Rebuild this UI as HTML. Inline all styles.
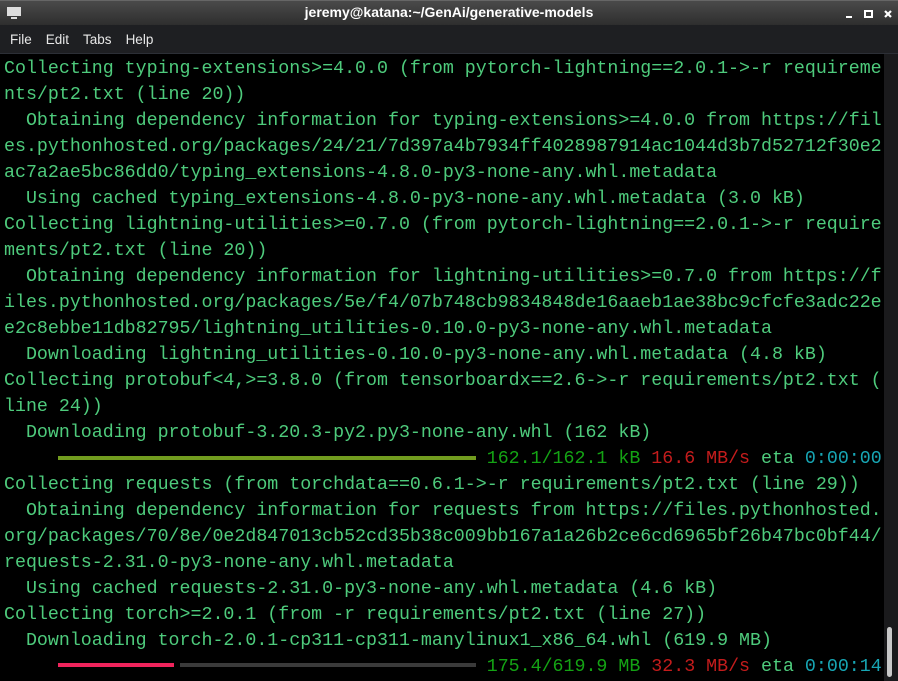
<!DOCTYPE html>
<html><head><meta charset="utf-8"><style>
body{margin:0;width:898px;height:681px;background:#000;overflow:hidden;font-family:"Liberation Sans",sans-serif;position:relative}
#title{position:absolute;left:0;top:0;width:898px;height:25px;background:linear-gradient(#4a4a4a,#2e2e2e);border-top:1px solid #666;box-sizing:border-box;color:#fff;font-weight:bold;font-size:14px;text-align:center;line-height:23px}
#menu{position:absolute;left:0;top:25px;width:898px;height:28px;background:#1e1f22;border-bottom:1px solid #2c2f36;color:#e8e8e8;font-size:13.5px;line-height:29px}
#menu span{margin-left:10px;margin-right:4px}
#term{position:absolute;left:4px;top:56px;font-family:"Liberation Mono",monospace;font-size:18.3px;line-height:26px;color:#4ecb7c;white-space:pre}
#sb{position:absolute;left:884px;top:54px;width:14px;height:627px;background:#1a1a1c}
#thumb{position:absolute;left:887px;top:627px;width:5px;height:50px;background:#c8c8c8;border-radius:3px}
.g{color:#14a314}.r{color:#c41c1c}.c{color:#17a6b4}
.bar{position:absolute;height:4px}
</style></head><body>
<div id="title"><svg style="position:absolute;left:6px;top:5px" width="16" height="14"><rect x="1" y="1" width="14" height="9" fill="#ddd"/><rect x="5" y="11" width="6" height="2" fill="#ddd"/></svg>jeremy@katana:~/GenAi/generative-models
<svg style="position:absolute;left:843px;top:8px" width="50" height="10"><rect x="3" y="7" width="6" height="2" fill="#fff"/><rect x="22" y="2" width="7" height="6" fill="none" stroke="#fff" stroke-width="2"/><path d="M42 2l6 6M48 2l-6 6" stroke="#fff" stroke-width="2.2"/></svg></div>
<div id="menu"><span>File</span><span>Edit</span><span>Tabs</span><span>Help</span></div>
<div id="term">Collecting typing-extensions&gt;=4.0.0 (from pytorch-lightning==2.0.1-&gt;-r requireme
nts/pt2.txt (line 20))
  Obtaining dependency information for typing-extensions&gt;=4.0.0 from https://fil
es.pythonhosted.org/packages/24/21/7d397a4b7934ff4028987914ac1044d3b7d52712f30e2
ac7a2ae5bc86dd0/typing_extensions-4.8.0-py3-none-any.whl.metadata
  Using cached typing_extensions-4.8.0-py3-none-any.whl.metadata (3.0 kB)
Collecting lightning-utilities&gt;=0.7.0 (from pytorch-lightning==2.0.1-&gt;-r require
ments/pt2.txt (line 20))
  Obtaining dependency information for lightning-utilities&gt;=0.7.0 from https://f
iles.pythonhosted.org/packages/5e/f4/07b748cb9834848de16aaeb1ae38bc9cfcfe3adc22e
e2c8ebbe11db82795/lightning_utilities-0.10.0-py3-none-any.whl.metadata
  Downloading lightning_utilities-0.10.0-py3-none-any.whl.metadata (4.8 kB)
Collecting protobuf&lt;4,&gt;=3.8.0 (from tensorboardx==2.6-&gt;-r requirements/pt2.txt (
line 24))
  Downloading protobuf-3.20.3-py2.py3-none-any.whl (162 kB)
                                            <span class="g">162.1/162.1 kB</span> <span class="r">16.6 MB/s</span> eta <span class="c">0:00:00</span>
Collecting requests (from torchdata==0.6.1-&gt;-r requirements/pt2.txt (line 29))
  Obtaining dependency information for requests from https://files.pythonhosted.
org/packages/70/8e/0e2d847013cb52cd35b38c009bb167a1a26b2ce6cd6965bf26b47bc0bf44/
requests-2.31.0-py3-none-any.whl.metadata
  Using cached requests-2.31.0-py3-none-any.whl.metadata (4.6 kB)
Collecting torch&gt;=2.0.1 (from -r requirements/pt2.txt (line 27))
  Downloading torch-2.0.1-cp311-cp311-manylinux1_x86_64.whl (619.9 MB)
                                            <span class="g">175.4/619.9 MB</span> <span class="r">32.3 MB/s</span> eta <span class="c">0:00:14</span></div>
<div class="bar" style="left:58px;top:456px;width:418px;background:#729c1f"></div>
<div class="bar" style="left:58px;top:663px;width:116px;background:#f0245c"></div>
<div class="bar" style="left:180px;top:663px;width:296px;background:#3a3a3a"></div>
<div id="sb"></div><div id="thumb"></div>
</body></html>
